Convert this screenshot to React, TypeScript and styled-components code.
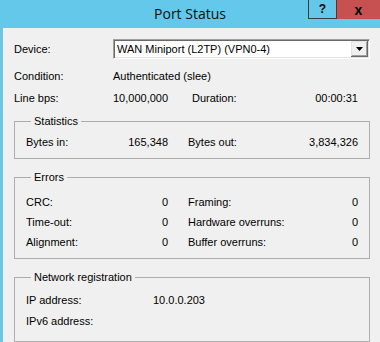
import React from "react";
import styled, { createGlobalStyle } from "styled-components";

const Global = createGlobalStyle`
  html, body { margin: 0; padding: 0; background: #f0f0f0; }
  body { font-family: "Liberation Sans", Arial, sans-serif; font-size: 11px; color: #000; }
  * { box-sizing: border-box; }
`;

const Window = styled.div`
  width: 380px;
  height: 342px;
  overflow: hidden;
  display: flex;
  flex-direction: column;
  background: #63c8ea;
`;

const TitleBar = styled.div`
  height: 28px;
  flex: none;
  display: grid;
  grid-template-columns: 72px 1fr 72px;
  align-items: start;
`;

const Title = styled.div`
  grid-column: 2;
  height: 26px;
  display: flex;
  align-items: center;
  justify-content: center;
  font-family: "Open Sans", "Noto Sans", sans-serif;
  font-size: 14px;
  color: #111;
`;

const Buttons = styled.div`
  grid-column: 3;
  display: flex;
  height: 19px;
`;

const CaptionButton = styled.div<{ $close?: boolean }>`
  height: 19px;
  width: ${(p) => (p.$close ? 43 : 29)}px;
  display: flex;
  align-items: center;
  justify-content: center;
  background: ${(p) => (p.$close ? "#c75050" : "transparent")};
  border: ${(p) => (p.$close ? "none" : "1px solid #3c3c3c")};
  border-top: none;
  font-family: "Liberation Sans", Arial, sans-serif;
  font-weight: bold;
  font-size: ${(p) => (p.$close ? 14 : 12)}px;
  color: #000;
`;

const Content = styled.div`
  flex: 1;
  margin-left: 3px;
  background: #f0f0f0;
  padding: 11px 10px 0 11px;
  display: flex;
  flex-direction: column;
`;

const DeviceRow = styled.div`
  display: grid;
  grid-template-columns: 99px 1fr;
  align-items: center;
  height: 20px;
`;

const Combo = styled.div`
  height: 20px;
  display: flex;
  align-items: center;
  background: #fff;
  border-top: 1px solid #a0a0a0;
  border-left: 1px solid #a0a0a0;
  border-right: 1px solid #ffffff;
  border-bottom: 1px solid #ffffff;
  box-shadow: inset 1px 1px 0 #696969, inset -1px -1px 0 #e3e3e3;
  padding: 1px 1px 1px 3px;
`;

const ComboText = styled.span`
  flex: 1;
  white-space: nowrap;
`;

const DropButton = styled.div`
  width: 17px;
  height: 16px;
  display: flex;
  align-items: center;
  justify-content: center;
  background: #f0f0f0;
  box-shadow: inset -1px -1px 0 #696969, inset 1px 1px 0 #e3e3e3, inset -2px -2px 0 #a0a0a0;
`;

const Row = styled.div<{ $h?: number; $mt?: number }>`
  height: ${(p) => p.$h ?? 22}px;
  margin-top: ${(p) => p.$mt ?? 0}px;
  display: flex;
  align-items: center;
  white-space: nowrap;
`;

const TopGrid = styled.div`
  height: 22px;
  display: grid;
  grid-template-columns: 99px 55px 1fr;
  align-items: center;
  white-space: nowrap;
`;

const LabelCell = styled.span<{ $w?: number }>`
  ${(p) => (p.$w ? `width: ${p.$w}px; flex: none;` : "")}
`;

const RightValue = styled.span`
  text-align: right;
`;

const SplitCell = styled.div<{ $pl?: number; $pr?: number }>`
  display: flex;
  justify-content: space-between;
  padding-left: ${(p) => p.$pl ?? 0}px;
  padding-right: ${(p) => p.$pr ?? 0}px;
`;

const Group = styled.fieldset<{ $mt: number; $pt: number; $grow?: boolean }>`
  margin: ${(p) => p.$mt}px 0 0 0;
  border: 1px solid #adadad;
  padding: ${(p) => p.$pt}px 11px 6px 11px;
  min-width: 0;
  ${(p) => (p.$grow ? "flex: 1;" : "")}
`;

const Legend = styled.legend`
  margin-left: 5px;
  padding: 0 3px;
  line-height: 14px;
  font-size: 11px;
`;

const PairGrid = styled.div`
  display: grid;
  grid-template-columns: 142px 170px;
  column-gap: 20px;
  grid-auto-rows: 20px;
  align-items: center;
  white-space: nowrap;
`;

const InfoGrid = styled.div`
  display: grid;
  grid-template-columns: 127px 1fr;
  grid-auto-rows: 21px;
  align-items: center;
  white-space: nowrap;
`;

const Caret = () => (
  <svg width="7" height="4" viewBox="0 0 7 4">
    <path d="M0 0h7L3.5 4z" fill="#000" />
  </svg>
);

const Pair = ({ a, av, b, bv }: { a: string; av: string; b: string; bv: string }) => (
  <>
    <SplitCell>
      <span>{a}</span>
      <span>{av}</span>
    </SplitCell>
    <SplitCell>
      <span>{b}</span>
      <span>{bv}</span>
    </SplitCell>
  </>
);

export default function App() {
  return (
    <>
      <Global />
      <Window>
        <TitleBar>
          <Title>Port Status</Title>
          <Buttons>
            <CaptionButton>?</CaptionButton>
            <CaptionButton $close>x</CaptionButton>
          </Buttons>
        </TitleBar>
        <Content>
          <DeviceRow>
            <span>Device:</span>
            <Combo>
              <ComboText>WAN Miniport (L2TP) (VPN0-4)</ComboText>
              <DropButton>
                <Caret />
              </DropButton>
            </Combo>
          </DeviceRow>
          <Row $mt={6}>
            <LabelCell $w={99}>Condition:</LabelCell>
            <span>Authenticated (slee)</span>
          </Row>
          <TopGrid>
            <span>Line bps:</span>
            <RightValue>10,000,000</RightValue>
            <SplitCell $pl={24} $pr={12}>
              <span>Duration:</span>
              <span>00:00:31</span>
            </SplitCell>
          </TopGrid>

          <Group $mt={5} $pt={4}>
            <Legend>Statistics</Legend>
            <PairGrid>
              <Pair a="Bytes in:" av="165,348" b="Bytes out:" bv="3,834,326" />
            </PairGrid>
          </Group>

          <Group $mt={11} $pt={8}>
            <Legend>Errors</Legend>
            <PairGrid>
              <Pair a="CRC:" av="0" b="Framing:" bv="0" />
              <Pair a="Time-out:" av="0" b="Hardware overruns:" bv="0" />
              <Pair a="Alignment:" av="0" b="Buffer overruns:" bv="0" />
            </PairGrid>
          </Group>

          <Group $mt={11} $pt={5} $grow>
            <Legend>Network registration</Legend>
            <InfoGrid>
              <span>IP address:</span>
              <span>10.0.0.203</span>
              <span>IPv6 address:</span>
              <span></span>
            </InfoGrid>
          </Group>
        </Content>
      </Window>
    </>
  );
}
